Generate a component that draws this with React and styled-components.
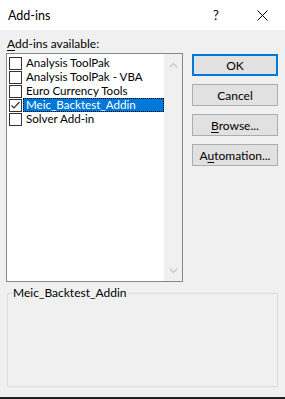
import React from "react"
import styled, { createGlobalStyle } from "styled-components"

const GlobalStyle = createGlobalStyle`
  html, body {
    margin: 0;
    padding: 0;
    background: #202020;
  }
  body {
    font-family: Lato, "Noto Sans", "Liberation Sans", sans-serif;
    font-size: 12px;
    color: #000;
  }
`

const Dialog = styled.div`
  width: 285px;
  height: 397px;
  background: #f0f0f0;
  display: flex;
  flex-direction: column;
  overflow: hidden;
`

const TitleBar = styled.div`
  height: 30px;
  background: #fff;
  display: flex;
  align-items: center;
  padding-left: 8px;
  flex-shrink: 0;
`

const Title = styled.div`
  flex: 1;
  font-size: 12.5px;
`

const TitleButton = styled.div`
  width: ${props => props.w}px;
  height: 30px;
  display: flex;
  align-items: center;
  justify-content: center;
  font-size: 13px;
`

const Body = styled.div`
  display: flex;
  flex-direction: column;
  padding: 6px 7px 0 6px;
`

const Top = styled.div`
  display: flex;
  gap: 9px;
`

const LeftCol = styled.div`
  display: flex;
  flex-direction: column;
  width: 177px;
`

const Label = styled.div`
  height: 17px;
  line-height: 16px;
  padding-left: 1px;
`

const ListBox = styled.div`
  height: 229px;
  border: 1px solid #828790;
  background: #fff;
  display: flex;
  box-sizing: border-box;
`

const Items = styled.div`
  flex: 1;
  padding: 2px 0 0 2px;
  display: flex;
  flex-direction: column;
`

const Row = styled.div`
  height: 14px;
  display: flex;
  align-items: center;
`

const Check = styled.div`
  width: 13px;
  height: 13px;
  box-sizing: border-box;
  border: 1px solid #333;
  background: #fff;
  display: flex;
  align-items: center;
  justify-content: center;
  flex-shrink: 0;
`

const ItemText = styled.div`
  flex: 1;
  height: 14px;
  margin-left: 1px;
  padding-left: 3px;
  font-size: 11.6px;
  line-height: 14px;
  white-space: nowrap;
  box-sizing: border-box;
  background: ${props => (props.selected ? "#0078d7" : "transparent")};
  color: ${props => (props.selected ? "#fff" : "#000")};
  outline: ${props => (props.selected ? "1px dotted #000" : "none")};
  outline-offset: -1px;
`

const ScrollBar = styled.div`
  width: 18px;
  background: #f0f0f0;
  display: flex;
  flex-direction: column;
  justify-content: space-between;
  align-items: center;
  padding: 8px 0 7px;
`

const Buttons = styled.div`
  display: flex;
  flex-direction: column;
  gap: 8px;
  padding-top: 18px;
`

const Button = styled.div`
  width: 86px;
  height: 22px;
  box-sizing: border-box;
  border: ${props => (props.primary ? "2px solid #0078d7" : "1px solid #adadad")};
  background: #e1e1e1;
  display: flex;
  align-items: center;
  justify-content: center;
`

const GroupBox = styled.fieldset`
  margin: 4px 0 0 1px;
  height: 101px;
  box-sizing: border-box;
  border: 1px solid #dcdcdc;
  padding: 0;
`

const Legend = styled.legend`
  margin-left: 4px;
  padding: 0 1px;
  line-height: 14px;
`

const U = styled.span`
  text-decoration: underline;
  text-underline-offset: 2px;
`

const Chevron = ({ down }) => (
  <svg width="9" height="6" viewBox="0 0 9 6">
    <path
      d={down ? "M1 1 L4.5 4.5 L8 1" : "M1 5 L4.5 1.5 L8 5"}
      fill="none"
      stroke="#c2c2c2"
      strokeWidth="1.2"
    />
  </svg>
)

const CheckMark = () => (
  <svg width="11" height="11" viewBox="0 0 11 11">
    <path d="M1.5 5.5 L4 8 L9.5 2" fill="none" stroke="#333" strokeWidth="1.2" />
  </svg>
)

const items = [
  { name: "Analysis ToolPak" },
  { name: "Analysis ToolPak - VBA" },
  { name: "Euro Currency Tools" },
  { name: "Meic_Backtest_Addin", checked: true, selected: true },
  { name: "Solver Add-in" },
]

const App = () => (
  <>
    <GlobalStyle />
    <Dialog>
      <TitleBar>
        <Title>Add-ins</Title>
        <TitleButton w={46}>?</TitleButton>
        <TitleButton w={46}>
          <svg width="11" height="11" viewBox="0 0 11 11">
            <path d="M0.5 0.5 L10.5 10.5 M10.5 0.5 L0.5 10.5" stroke="#000" strokeWidth="1" />
          </svg>
        </TitleButton>
      </TitleBar>
      <Body>
        <Top>
          <LeftCol>
            <Label>
              <U>A</U>dd-ins available:
            </Label>
            <ListBox>
              <Items>
                {items.map(item => (
                  <Row key={item.name}>
                    <Check>{item.checked && <CheckMark />}</Check>
                    <ItemText selected={item.selected}>{item.name}</ItemText>
                  </Row>
                ))}
              </Items>
              <ScrollBar>
                <Chevron />
                <Chevron down />
              </ScrollBar>
            </ListBox>
          </LeftCol>
          <Buttons>
            <Button primary>OK</Button>
            <Button>Cancel</Button>
            <Button>
              <span>
                <U>B</U>rowse...
              </span>
            </Button>
            <Button>
              <span>
                A<U>u</U>tomation...
              </span>
            </Button>
          </Buttons>
        </Top>
        <GroupBox>
          <Legend>Meic_Backtest_Addin</Legend>
        </GroupBox>
      </Body>
    </Dialog>
  </>
)

export default App
